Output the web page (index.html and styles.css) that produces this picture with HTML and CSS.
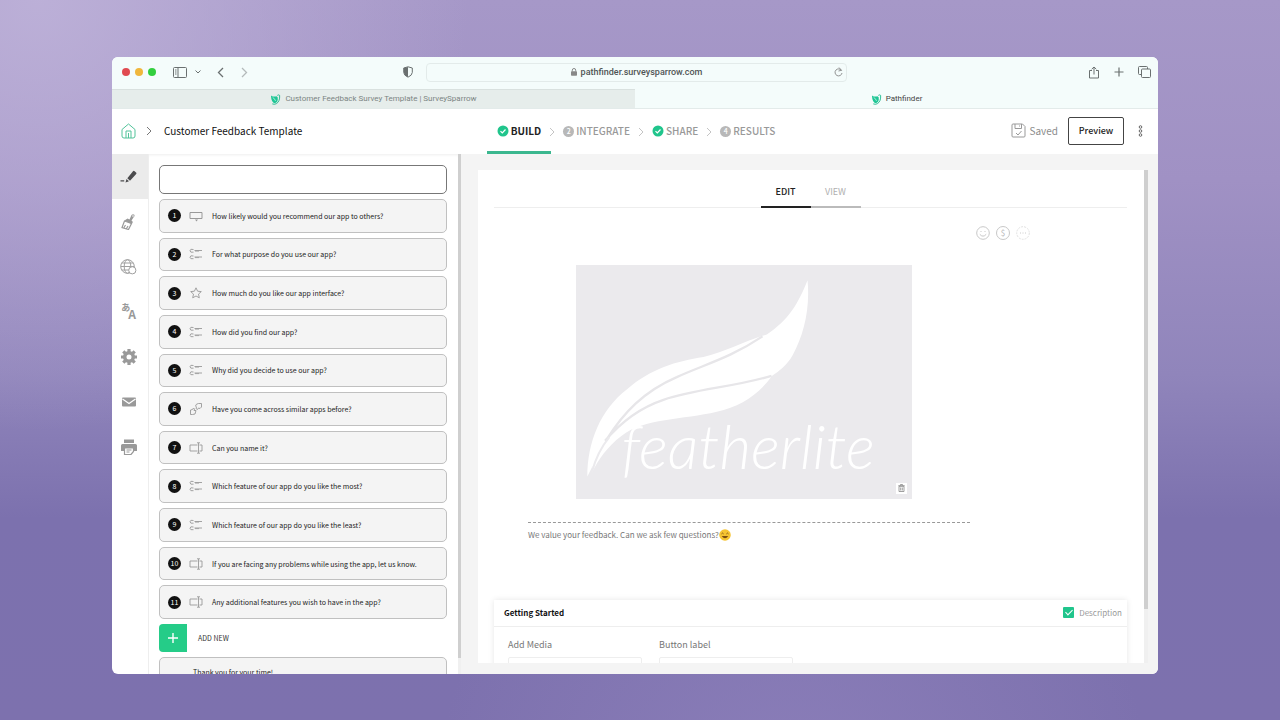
FILE: index.html
```html
<!DOCTYPE html>
<html lang="en">
<head>
<meta charset="utf-8">
<title>Pathfinder</title>
<link rel="stylesheet" href="styles.css">
</head>
<body>
<svg class="sprite" aria-hidden="true">
  <symbol id="bird" viewBox="0 0 12 12"><path d="M1 1.500Q4 3.500 7 2.500Q9 3 8.500 6Q8 9.500 5 10Q1.500 9 1 1.500Z" fill="#1fc796"/><path d="M8 1.500Q9.500 .5 10.500 1.500Q11 8 7 10.500Q5 11.800 2.500 10.800" fill="none" stroke="#1fb98c"/><path d="M3 4Q5 4.500 6 7.500" fill="none" stroke="#f3fbfa" stroke-width=".7"/></symbol>
  <symbol id="chev" viewBox="0 0 6 10"><path d="M1 1 5 5 1 9" fill="none" stroke="currentColor"/></symbol>
  <symbol id="done" viewBox="0 0 12 12"><circle cx="6" cy="6" r="5.500" fill="#20c58c"/><path d="M3.500 6.200 5.300 8 8.500 4.500" fill="none" stroke="#fff" stroke-width="1.200"/></symbol>
  <symbol id="rating" viewBox="0 0 14 12"><path d="M1 2.500h12v6H1z" fill="none" stroke="currentColor"/><path d="M6 9.500h3L7.500 11.500z" fill="currentColor"/></symbol>
  <symbol id="choice" viewBox="0 0 14 12"><path d="M4.500 1.500Q1 .5 1 2.800 1 4.800 4.500 4.200M4.500 8Q1 7 1 9.300 1 11.300 4.500 10.700M5.500 2.500H13M5.500 9H13" fill="none" stroke="currentColor" stroke-width=".9"/><path d="M6 3.100h4M6 9.600h4" stroke="currentColor" stroke-width=".8"/></symbol>
  <symbol id="star" viewBox="0 0 14 12"><path d="m7 .8 1.600 3.400 3.700.4-2.800 2.500.8 3.700L7 9 3.700 10.800l.8-3.700L1.700 4.600l3.700-.4z" fill="none" stroke="currentColor" stroke-width=".9"/></symbol>
  <symbol id="thumbs" viewBox="0 0 14 12"><path d="M7.500 1.200 9.500.5H12.500V4L11 5.500 9.500 5 8.500 6.500 7 5.500 7.500 4 6.500 3zM1.500 7 3.500 6.500 4.500 5 5.500 6 5 7.500H7L6 11 3.500 11.500H1.500z" fill="none" stroke="currentColor" stroke-width=".9"/></symbol>
  <symbol id="input" viewBox="0 0 14 12"><path d="M8.500 3H1v6h7.500M10.500 3H13v6h-2.500M9.500 1v10M8 .8h3M8 11.200h3" fill="none" stroke="currentColor" stroke-width=".9"/></symbol>
</svg>

<div class="window">
  <header class="toolbar">
    <div class="tools">
      <span class="lights"><i class="light red"></i><i class="light amber"></i><i class="light green"></i></span>
      <button class="tool sidebar-tool" aria-label="Sidebar"><svg width="14" height="11" viewBox="0 0 14 11"><rect x=".5" y=".5" width="13" height="10" rx="1" fill="none" stroke="currentColor"/><path d="M5 .5v10M2 3h1.500M2 5h1.500M2 7h1.500" stroke="currentColor"/></svg></button>
      <button class="tool more-tool" aria-label="Tab groups"><svg width="6" height="4" viewBox="0 0 6 4"><path d="m.5.5 2.500 2.500L5.500.5" fill="none" stroke="currentColor"/></svg></button>
      <button class="tool back-tool" aria-label="Back"><svg width="7" height="11" viewBox="0 0 7 11"><path d="M6 1 1.500 5.500 6 10" fill="none" stroke="currentColor" stroke-width="1.300"/></svg></button>
      <button class="tool faint" aria-label="Forward"><svg width="7" height="11" viewBox="0 0 7 11"><path d="M1 1 5.500 5.500 1 10" fill="none" stroke="currentColor" stroke-width="1.300"/></svg></button>
      <button class="tool shield" aria-label="Privacy"><svg width="10" height="12" viewBox="0 0 10 12"><path d="M5 .8 9.300 2v4.500Q9 9.500 5 11.200 1 9.500.7 6.500V2z" fill="none" stroke="currentColor"/><path d="M5 1 1 2v4.500Q1.500 9.500 5 11z" fill="currentColor"/></svg></button>
    </div>
    <div class="address">
      <svg width="6" height="8" viewBox="0 0 6 8"><rect y="3.200" width="6" height="4.600" rx=".7" fill="#888"/><path d="M1.300 3.500V2.200a1.700 1.700 0 0 1 3.400 0v1.300" fill="none" stroke="#888"/></svg>
      <span>pathfinder.surveysparrow.com</span>
      <button class="reload" aria-label="Reload"><svg width="9" height="10" viewBox="0 0 9 10"><path d="M7.500 3.500A3.500 3.500 0 1 0 8 6M5 .5l2.500 2.800L4.500 4" fill="none" stroke="currentColor" stroke-width=".9"/></svg></button>
    </div>
    <div class="tools right">
      <button class="tool" aria-label="Share"><svg width="12" height="13" viewBox="0 0 12 13"><path d="M4 4.500H1.500v7.500h9V4.500H8M6 8.500V1M3.700 3.200 6 1l2.300 2.200" fill="none" stroke="currentColor"/></svg></button>
      <button class="tool" aria-label="New tab"><svg width="10" height="10" viewBox="0 0 10 10"><path d="M5 .5v9M.5 5h9" stroke="currentColor" stroke-width="1.200"/></svg></button>
      <button class="tool" aria-label="Tab overview"><svg width="13" height="12" viewBox="0 0 13 12"><path d="M3.500 8.500h-2a1 1 0 0 1-1-1v-6a1 1 0 0 1 1-1h7a1 1 0 0 1 1 1v1.500" fill="none" stroke="currentColor"/><rect x="3.500" y="3" width="9" height="8.500" rx="1" fill="none" stroke="currentColor"/></svg></button>
    </div>
  </header>

  <nav class="tabs">
    <a class="tab" href="#"><svg width="11" height="11"><use href="#bird"/></svg>Customer Feedback Survey Template | SurveySparrow</a>
    <a class="tab active" href="#"><svg width="11" height="11"><use href="#bird"/></svg>Pathfinder</a>
  </nav>

  <header class="appbar">
    <div class="crumbs">
      <a href="#" class="home" aria-label="Home"><svg width="15" height="16" viewBox="0 0 15 16"><path d="M1 6.500 7.500 1 14 6.500V13a2 2 0 0 1-2 2H3a2 2 0 0 1-2-2zM5 15V8h5v7M7.500 10v5" fill="none" stroke="#52c39a"/></svg></a>
      <svg class="crumb-chev" width="6" height="10"><use href="#chev"/></svg>
      <h1>Customer Feedback Template</h1>
    </div>
    <nav class="steps">
      <a class="step current" href="#"><svg width="12" height="12"><use href="#done"/></svg>BUILD</a>
      <svg class="step-chev" width="6" height="10"><use href="#chev"/></svg>
      <a class="step" href="#"><span class="num">2</span>INTEGRATE</a>
      <svg class="step-chev" width="6" height="10"><use href="#chev"/></svg>
      <a class="step" href="#"><svg width="12" height="12"><use href="#done"/></svg>SHARE</a>
      <svg class="step-chev" width="6" height="10"><use href="#chev"/></svg>
      <a class="step" href="#"><span class="num">4</span>RESULTS</a>
    </nav>
    <div class="actions">
      <svg width="15" height="15" viewBox="0 0 15 15"><path d="M1 2a1 1 0 0 1 1-1h9.500L14 3.500V13a1 1 0 0 1-1 1H2a1 1 0 0 1-1-1zM4 1v4.500h6.500V1M8 3h1M5 10l2 2 3.500-4" fill="none" stroke="#999"/></svg>
      <span class="saved">Saved</span>
      <button class="preview">Preview</button>
      <button class="kebab" aria-label="More"><svg width="5" height="12" viewBox="0 0 5 12"><g fill="none" stroke="#666"><circle cx="2.500" cy="2" r="1.300"/><circle cx="2.500" cy="6" r="1.300"/><circle cx="2.500" cy="10" r="1.300"/></g></svg></button>
    </div>
  </header>

  <main class="main">
    <nav class="rail">
      <a href="#" class="rail-item on" aria-label="Edit"><svg width="17" height="14" viewBox="0 0 17 14"><path d="M5.500 12.500 6.500 9 9 11.300zM7.300 8.200 13 1.200Q13.600.6 14.300 1L16.300 2.800Q16.700 3.400 16.200 4L10 10.700zM.5 10.300h3.700v1.300H.5z" fill="#4c4c4e"/></svg></a>
      <a href="#" class="rail-item" aria-label="Design"><svg width="15" height="16" viewBox="0 0 15 16"><path d="M3.500 7 1 13.500 7.500 15.500 10.500 9.500zM3 13.500 4.500 11M5.500 14.500 7 12" fill="none" stroke="#999" stroke-width="1.200"/><path d="M3.500 6.500 6.500 4.500 8.500 5.500 10.500 1 Q12-.3 13.300.8 14 2 12.800 3L10.500 6.500 12 8 10.500 10z" fill="#999"/><circle cx="12" cy="2" r=".8" fill="#fff"/></svg></a>
      <a href="#" class="rail-item" aria-label="Language"><svg width="17" height="16" viewBox="0 0 17 16"><g fill="none" stroke="#a0a0a0"><circle cx="7.500" cy="7.500" r="6.800"/><ellipse cx="7.500" cy="7.500" rx="3.300" ry="6.800"/><path d="M.7 7.500h13.600M1.700 4h11.600M1.700 11h11.600"/></g><circle cx="12.300" cy="11.300" r="3.600" fill="#fff" stroke="#a0a0a0"/></svg></a>
      <a href="#" class="rail-item translate" aria-label="Translate"><span class="kana">あ</span><span class="latin">A</span></a>
      <a href="#" class="rail-item" aria-label="Settings"><svg width="16" height="16" viewBox="0 0 16 16"><circle cx="8" cy="8" r="4.300" fill="none" stroke="#999" stroke-width="3.600"/><path d="M8 0v3M8 13v3M0 8h3M13 8h3M2.300 2.300l2 2M11.700 11.700l2 2M2.300 13.700l2-2M11.700 4.300l2-2" stroke="#999" stroke-width="3.200"/></svg></a>
      <a href="#" class="rail-item" aria-label="Email"><svg width="14" height="10" viewBox="0 0 14 10"><rect y=".5" width="14" height="9" rx="1" fill="#999"/><path d="m.5 2 6.500 4.500L13.500 2" fill="none" stroke="#fff" stroke-width="1.200"/></svg></a>
      <a href="#" class="rail-item" aria-label="Print"><svg width="16" height="16" viewBox="0 0 16 16"><path d="M3 4V.5h10V4zM0 6.500Q0 5 1.500 5h13Q16 5 16 6.500V12h-3V9H3v3H0z" fill="#999"/><path d="M3.500 9h9v3.500l-2.500 3H3.500z" fill="#fff" stroke="#999" stroke-width="1.200"/><path d="M5.500 11h5M5.500 13h3" stroke="#999"/></svg></a>
    </nav>

    <section class="questions">
      <input class="search" type="text" aria-label="Search questions">
      <ol class="list">
        <li class="card"><span class="dot">1</span><svg width="14" height="12"><use href="#rating"/></svg>How likely would you recommend our app to others?</li>
        <li class="card"><span class="dot">2</span><svg width="14" height="12"><use href="#choice"/></svg>For what purpose do you use our app?</li>
        <li class="card"><span class="dot">3</span><svg width="14" height="12"><use href="#star"/></svg>How much do you like our app interface?</li>
        <li class="card"><span class="dot">4</span><svg width="14" height="12"><use href="#choice"/></svg>How did you find our app?</li>
        <li class="card"><span class="dot">5</span><svg width="14" height="12"><use href="#choice"/></svg>Why did you decide to use our app?</li>
        <li class="card"><span class="dot">6</span><svg width="14" height="12"><use href="#thumbs"/></svg>Have you come across similar apps before?</li>
        <li class="card"><span class="dot">7</span><svg width="14" height="12"><use href="#input"/></svg>Can you name it?</li>
        <li class="card"><span class="dot">8</span><svg width="14" height="12"><use href="#choice"/></svg>Which feature of our app do you like the most?</li>
        <li class="card"><span class="dot">9</span><svg width="14" height="12"><use href="#choice"/></svg>Which feature of our app do you like the least?</li>
        <li class="card"><span class="dot">10</span><svg width="14" height="12"><use href="#input"/></svg>If you are facing any problems while using the app, let us know.</li>
        <li class="card"><span class="dot">11</span><svg width="14" height="12"><use href="#input"/></svg>Any additional features you wish to have in the app?</li>
      </ol>
      <button class="add"><span class="plus"><svg width="10" height="10" viewBox="0 0 10 10"><path d="M5 0v10M0 5h10" stroke="#fff" stroke-width="1.400"/></svg></span>ADD NEW</button>
      <div class="card thanks">Thank you for your time!</div>
    </section>
    <div class="track list-track"><div class="thumb"></div></div>

    <section class="canvas">
      <div class="panel">
        <div class="modes">
          <button class="mode on">EDIT</button><button class="mode">VIEW</button>
        </div>
        <div class="stage">
          <div class="inserts">
            <svg width="14" height="14" viewBox="0 0 14 14"><g fill="none" stroke="#c8c8c8"><circle cx="7" cy="7" r="6.300"/><path d="M3.800 8.300Q7 12 10.200 8.300M4.500 5.500h1M8.500 5.500h1"/></g></svg>
            <span class="money">$</span>
            <svg width="14" height="14" viewBox="0 0 14 14"><circle cx="7" cy="7" r="6.300" fill="none" stroke="#e0e0e0" stroke-dasharray="2 1"/><path d="M4 7h1M6.500 7h1M9 7h1" stroke="#ccc"/></svg>
          </div>
          <div class="picture">
            <svg class="logo" viewBox="18 16 1008 700" role="img" aria-label="featherlite">
              <path d="M52 650C52 550 90 450 172 388C240 328 320 304 400 292C470 274 520 246 590 224C655 182 684 132 712 62C720 150 700 225 668 285C650 318 625 335 606 348C565 405 510 440 440 456C340 480 220 475 155 528C112 560 85 600 66 638L68 618Z" fill="#fff"/>
              <path d="M577 230C480 295 400 315 320 352C220 395 160 460 112 536M604 348C490 383 380 386 280 420C205 445 150 490 105 543" fill="none" stroke="#e7e6e9" stroke-width="7"/>
              <path d="M118 532Q82 575 66 636" fill="none" stroke="#ebeaed" stroke-width="6"/>
              <text x="154" y="626" class="wordmark">featherlite</text>
            </svg>
            <button class="trash" aria-label="Remove image"><svg width="7" height="8" viewBox="0 0 7 8"><path d="M1 2.300h5V7.500H1zM.3 1.700h6.400M2.500 1.500V.5h2v1M2.700 3.500V6.500M4.300 3.500V6.500" fill="none" stroke="#888" stroke-width=".8"/></svg></button>
          </div>
          <p class="message">We value your feedback. Can we ask few questions?<svg width="12" height="12" viewBox="0 0 11 11"><circle cx="5.500" cy="5.500" r="5.300" fill="#f6c433"/><path d="M2.500 6.500Q5.500 10.500 8.500 6.500Z" fill="#7b4e12"/><path d="M2.300 4.500Q3.200 3 4.200 4.500M6.800 4.500Q7.800 3 8.700 4.500" fill="none" stroke="#7b4e12" stroke-width=".8"/></svg></p>
        </div>
        <div class="settings">
          <div class="settings-head">
            <h2>Getting Started</h2>
            <label class="check"><input type="checkbox" checked>Description</label>
          </div>
          <div class="fields">
            <label class="field">Add Media<input type="text"></label>
            <label class="field">Button label<input type="text"></label>
          </div>
        </div>
      </div>
      <div class="track"><div class="thumb"></div></div>
    </section>
  </main>
</div>
</body>
</html>
```
FILE: styles.css
```css
* { box-sizing: border-box; }

body {
  margin: 0;
  height: 100vh;
  padding: 57px 122px 46px 112px;
  font-family: "Noto Sans CJK SC", "Noto Sans", sans-serif;
  font-size: 7px;
  line-height: 12px;
  color: #222;
  background:
    radial-gradient(circle at 3% 0, rgba(190, 178, 217, .9), transparent 30%),
    radial-gradient(ellipse at 62% 112%, rgba(143, 130, 188, .8), transparent 32%),
    linear-gradient(#a698c8 0, #a091c4 25%, #9085bb 52%, #7c71ae 72%, #7d71ae 100%);
}

h1, h2, p, ol { margin: 0; padding: 0; }
button { font: inherit; color: inherit; background: none; border: 0; padding: 0; }
a { color: inherit; text-decoration: none; }
svg { display: block; flex: none; }
.sprite { position: absolute; width: 0; height: 0; }

.window {
  height: 100%;
  display: flex;
  flex-direction: column;
  border-radius: 6px;
  overflow: hidden;
  background: #fff;
}

/* Browser chrome */
.toolbar {
  flex: none;
  display: grid;
  grid-template-columns: 1fr 41% 1fr;
  align-items: center;
  height: 32px;
  padding: 0 7px 2px 10px;
  background: #f4fcfb;
  font-family: Roboto, sans-serif;
}
.tools { display: flex; align-items: center; color: #6a7070; }
.tools.right { justify-content: flex-end; gap: 14px; }
.lights { display: flex; gap: 5px; margin-right: 17px; }
.light { width: 8px; height: 8px; border-radius: 50%; }
.red { background: #e04a50; }
.amber { background: #f0b73c; }
.green { background: #33cf3f; }
.sidebar-tool { margin-right: 8px; }
.more-tool { margin-right: 16px; }
.back-tool { margin-right: 17px; }
.faint { color: #b4baba; }
.shield { margin-left: auto; margin-right: 13px; }
.address {
  position: relative;
  display: flex;
  align-items: center;
  justify-content: center;
  gap: 4px;
  height: 19px;
  border: 1px solid #e3ebea;
  border-radius: 4px;
  font-size: 9px;
  font-weight: 500;
  color: #505555;
}
.reload { position: absolute; right: 3px; color: #888; }

.tabs { flex: none; display: flex; height: 20px; font-family: Roboto, sans-serif; }
.tab {
  flex: 1;
  display: flex;
  align-items: center;
  justify-content: center;
  gap: 4px;
  font-size: 8px;
  color: #7c8583;
  background: #e6edeb;
  border-top: 1px solid #d9e1df;
  border-bottom: 1px solid #e3ebea;
}
.tab.active { background: #f4fcfb; border-top-color: #f4fcfb; color: #444; }

/* Survey header */
.appbar {
  flex: none;
  display: grid;
  grid-template-columns: 1fr auto 1fr;
  align-items: center;
  height: 45px;
  padding: 0 15px 0 9px;
}
.crumbs { display: flex; align-items: center; padding-bottom: 2px; }
.crumb-chev { margin: 0 12px 0 10px; color: #777; }
.crumbs h1 { font-size: 10px; font-weight: 400; color: #111; }
.steps { display: flex; align-items: center; align-self: stretch; margin-left: 8px; font-size: 10px; font-weight: 500; color: #999; }
.step { display: flex; align-items: center; gap: 2px; align-self: stretch; padding: 2px 10px 0; border-bottom: 3px solid transparent; }
.step.current { color: #222; font-weight: 700; border-bottom-color: #3bb78f; }
.step-chev { margin: 0 -2px; color: #c4c4c4; }
.num { width: 11px; height: 11px; border-radius: 50%; background: #b8b8b8; color: #fff; font-size: 7px; line-height: 11px; text-align: center; }
.actions { display: flex; align-items: center; justify-content: flex-end; padding-bottom: 2px; }
.saved { margin: 0 10px 0 4px; font-size: 10px; color: #8c8c8c; }
.preview { width: 56px; height: 28px; border: 1px solid #444; border-radius: 2px; font-size: 9px; font-weight: 500; color: #222; }
.kebab { margin-left: 14px; }

/* Work area */
.main { flex: 1; min-height: 0; display: flex; }
.rail { flex: none; width: 37px; border-right: 1px solid #eee; }
.rail-item { display: flex; align-items: center; justify-content: center; height: 45px; padding-right: 3px; }
.rail-item.on { background: #ebebeb; }
.translate { color: #999; font-weight: 700; }
.kana { font-size: 9px; margin-top: -8px; }
.latin { font-size: 12px; margin-top: 4px; margin-left: -2px; }

.questions { width: 309px; flex: none; padding: 11px 11px 0 10px; overflow: hidden; box-shadow: inset 0 3px 3px -2px #eee; }
.search { display: block; width: 100%; height: 29px; border: 1px solid #777; border-radius: 5px; background: #fff; font: inherit; }
.list { display: grid; grid-auto-rows: 1fr; gap: 5px; min-height: 420px; margin: 5px 0; list-style: none; }
.card { display: flex; align-items: center; padding: 0 8px; border: 1px solid #c0c0c0; border-radius: 5px; background: #f4f4f4; }
.card svg { margin: 0 9px 0 8px; color: #999; }
.dot { width: 13px; height: 13px; border-radius: 50%; background: #111; color: #fff; line-height: 13px; text-align: center; }
.add { display: flex; align-items: center; gap: 11px; width: 100%; color: #333; }
.plus { display: grid; place-items: center; width: 28px; height: 28px; border-radius: 4px 0 0 4px; background: #25cc88; }
.thanks { align-items: flex-start; height: 34px; margin-top: 5px; padding: 8px 33px 0; }

.track { flex: none; width: 4px; background: #f0f0f0; }
.thumb { height: 89%; background: #cfcfcf; }
.list-track { width: 3px; }
.list-track .thumb { height: 97%; }

.canvas { flex: 1; min-width: 0; display: flex; padding: 16px 10px 11px 17px; background: #f4f4f4; }
.panel { flex: 1; min-width: 0; overflow: hidden; padding: 0 17px 0 16px; background: #fff; }
.modes { display: flex; justify-content: center; height: 38px; border-bottom: 1px solid #eee; }
.mode { width: 50px; height: 38px; padding-top: 8px; border-bottom: 2px solid #bbb; font-size: 9px; color: #b0b0b0; }
.mode.on { border-bottom-color: #222; font-weight: 500; color: #222; }
.stage { padding: 18px 97px 0 34px; }
.inserts { display: flex; justify-content: flex-end; gap: 6px; }
.money { width: 14px; height: 14px; border: 1px solid #c8c8c8; border-radius: 50%; font-size: 8px; line-height: 12px; text-align: center; color: #b5b5b5; }
.picture { position: relative; width: 67%; margin: 25px 0 0 48px; background: #ebeaed; }
.logo { width: 100%; }
.wordmark { font: italic 300 184px Lato, sans-serif; fill: #fff; }
.trash { position: absolute; right: 5px; bottom: 5px; display: grid; place-items: center; width: 11px; height: 11px; background: #fff; }
.message { display: flex; align-items: center; width: 88%; margin: 23px 0 59px; padding-top: 6px; border-top: 1px dashed #999; font-size: 8px; color: #777; }

.settings { background: #fff; box-shadow: 0 0 6px rgba(0, 0, 0, .1); }
.settings-head { display: flex; align-items: center; justify-content: space-between; height: 27px; padding: 0 5px 0 10px; border-bottom: 1px solid #eee; font-size: 8px; }
.settings-head h2 { font-size: 8px; font-weight: 700; color: #111; }
.check { display: flex; align-items: center; gap: 5px; color: #999; }
.check input { appearance: none; display: grid; place-items: center; width: 11px; height: 11px; margin: 0; border-radius: 1px; background: #20c58c; }
.check input:checked::after { content: ""; width: 3px; height: 6px; margin-bottom: 2px; border: solid #fff; border-width: 0 1px 1px 0; transform: rotate(45deg); }
.fields { display: flex; gap: 17px; padding: 12px 14px; }
.field { display: flex; flex-direction: column; gap: 6px; width: 134px; font-size: 9px; color: #777; }
.field input { height: 24px; width: 100%; border: 1px solid #eee; border-radius: 2px; font: inherit; }
```
